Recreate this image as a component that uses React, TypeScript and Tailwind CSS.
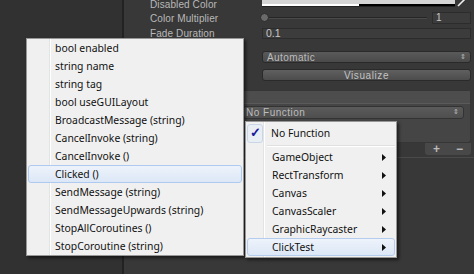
import React from "react";

const leftItems = [
    "bool enabled",
    "string name",
    "string tag",
    "bool useGUILayout",
    "BroadcastMessage (string)",
    "CancelInvoke (string)",
    "CancelInvoke ()",
    "Clicked ()",
    "SendMessage (string)",
    "SendMessageUpwards (string)",
    "StopAllCoroutines ()",
    "StopCoroutine (string)",
];

const rightItems = ["GameObject", "RectTransform", "Canvas", "CanvasScaler", "GraphicRaycaster", "ClickTest"];

const menuFont = { fontFamily: '"Noto Sans", "Open Sans", sans-serif' };
const unityFont = { fontFamily: '"Liberation Sans", Arial, sans-serif' };

function Arrow() {
    return (
        <svg width="4" height="7" viewBox="0 0 4 7" className="mr-[8px]">
            <polygon points="0,0 4,3.5 0,7" fill="#111" />
        </svg>
    );
}

function Label({ text }: { text: string }) {
    return (
        <div className="w-[138px] pl-[26px] shrink-0 text-[10px] tracking-[0.1px] text-[#b8b8b8] whitespace-nowrap">
            {text}
        </div>
    );
}

export default function App() {
    return (
        <div className="relative w-[474px] h-[274px] overflow-hidden bg-[#383838] flex" style={unityFont}>
            {/* hierarchy side */}
            <div className="w-[124px] shrink-0 bg-[#313131] border-r-2 border-[#222]" />

            {/* inspector */}
            <div className="flex-1 flex flex-col pr-[3px]">
                <div className="flex h-[13px] -mt-[6px] items-start">
                    <div className="pt-[3px]">
                        <Label text="Disabled Color" />
                    </div>
                    <div className="flex-1 flex items-start">
                        <div className="w-[193px] h-[13px] flex flex-col border-b border-[#222]">
                            <div className="flex-1 bg-[#d5d5d5]" />
                            <div className="h-[2px] flex">
                                <div className="w-[97px] bg-white" />
                                <div className="flex-1 bg-black" />
                            </div>
                        </div>
                        <svg width="10" height="9" viewBox="0 0 10 9" className="ml-[2px] mt-[4px]">
                            <line x1="1" y1="8" x2="8" y2="1" stroke="#eee" strokeWidth="1.6" />
                        </svg>
                    </div>
                </div>

                <div className="flex h-[16px] mt-[3px] items-center">
                    <Label text="Color Multiplier" />
                    <div className="flex-1 relative h-full flex items-center">
                        <div className="w-full h-[2px] bg-[#262626] border-b border-[#4a4a4a]" />
                        <div className="absolute left-[-2px] top-[3px] w-[9px] h-[9px] rounded-full bg-[#6a6a6a] border border-[#2a2a2a]" />
                    </div>
                    <div className="w-[39px] h-[12px] ml-[5px] bg-[#3c3c3c] border border-[#2c2c2c] text-[10px] leading-[10px] text-[#c8c8c8] pl-[3px]">
                        1
                    </div>
                </div>

                <div className="flex h-[14px] items-center">
                    <Label text="Fade Duration" />
                    <div className="flex-1 h-[11px] bg-[#3c3c3c] border border-[#2c2c2c] text-[10.5px] leading-[9px] text-[#c8c8c8] pl-[3px]">
                        0.1
                    </div>
                </div>

                <div className="flex h-[14px] mt-[10px] items-center">
                    <div className="w-[138px] shrink-0" />
                    <div className="flex-1 h-[12px] rounded-[3px] bg-gradient-to-b from-[#5a5a5a] to-[#4a4a4a] border border-[#2a2a2a] flex items-center justify-between px-[4px] text-[10px] tracking-[0.4px] text-[#bdbdbd]">
                        <span>Automatic</span>
                        <span className="text-[7px]">⇕</span>
                    </div>
                </div>

                <div className="flex h-[14px] mt-[4px] items-center">
                    <div className="w-[138px] shrink-0" />
                    <div className="flex-1 h-[12px] rounded-[3px] bg-gradient-to-b from-[#606060] to-[#4c4c4c] border border-[#2a2a2a] flex items-center justify-center text-[10px] tracking-[0.6px] text-[#c4c4c4]">
                        Visualize
                    </div>
                </div>

                <div className="ml-[8px] mt-[8px] h-[53px] rounded-[3px] bg-[#454545] border border-[#363636] flex flex-col">
                    <div className="h-[13px] bg-[#4d4d4d] border-b border-[#5a5a5a]" />
                    <div className="mt-[2px] mr-[6px] ml-[110px] h-[13px] rounded-[3px] bg-gradient-to-b from-[#5b5b5b] to-[#4e4e4e] border border-[#333] flex items-center justify-between pl-[2px] pr-[4px] text-[10px] tracking-[0.5px] text-[#bdbdbd]">
                        <span>No Function</span>
                        <span className="text-[7px]">⇕</span>
                    </div>
                </div>
                <div className="flex justify-end">
                    <div className="w-[46px] h-[12px] bg-[#484848] rounded-b-[3px] flex items-center justify-around text-[12px] leading-[12px] font-bold text-[#bbb]">
                        <span>+</span>
                        <span>−</span>
                    </div>
                </div>
                <div className="mt-[2px] h-px bg-[#4a4a4a] -mr-[3px]" />
            </div>

            {/* function list menu */}
            <div
                className="absolute left-[26px] top-[38px] w-[218px] bg-[#f0f0f0] border border-[#979797] shadow-[2px_2px_3px_rgba(0,0,0,0.55)] flex"
                style={menuFont}
            >
                <div className="absolute left-[22px] top-0 bottom-0 w-px bg-[#e2e3e3]" />
                <div className="absolute left-[23px] top-0 bottom-0 w-px bg-white" />
                <div className="relative flex-1 flex flex-col">
                    {leftItems.map((t) => (
                        <div
                            key={t}
                            className={
                                t === "Clicked ()"
                                    ? "h-[18px] mx-[1px] rounded-[3px] border border-[#aecaf0] bg-gradient-to-b from-[#eef3fb] to-[#dce7f6] flex items-center pl-[26px] pt-px text-[10.4px] text-[#111]"
                                    : "h-[18px] mx-[1px] flex items-center pl-[27px] pt-px text-[10.4px] text-[#111]"
                            }
                        >
                            {t}
                        </div>
                    ))}
                </div>
            </div>

            {/* component submenu */}
            <div
                className="absolute left-[245px] top-[121px] w-[152px] bg-[#f0f0f0] border border-[#979797] shadow-[2px_2px_3px_rgba(0,0,0,0.55)] pt-px pb-px"
                style={menuFont}
            >
                <div className="absolute left-[17px] top-0 bottom-0 w-px bg-[#e2e3e3]" />
                <div className="absolute left-[18px] top-0 bottom-0 w-px bg-white" />
                <div className="relative flex h-[20px] items-center">
                    <div className="ml-[1px] w-[16px] h-[19px] rounded-[3px] border border-[#c9d6e8] bg-[#e9eef5] flex items-center justify-center text-[13px] text-[#1b1b9c] font-bold">
                        ✓
                    </div>
                    <span className="ml-[8px] pt-px text-[10.4px] text-[#111]">No Function</span>
                </div>
                <div className="relative h-[5px] pt-[2px] ml-[21px] mr-px">
                    <div className="h-px bg-[#e0e0e0]" />
                    <div className="h-px bg-white" />
                </div>
                {rightItems.map((t) => (
                    <div
                        key={t}
                        className={
                            t === "ClickTest"
                                ? "relative h-[18px] mx-[1px] rounded-[3px] border border-[#b4cdee] bg-gradient-to-b from-[#eef3fb] to-[#dce7f6] flex items-center justify-between pl-[24px] pt-px text-[10.4px] text-[#111]"
                                : "relative h-[18px] mx-[1px] border border-transparent flex items-center justify-between pl-[24px] pt-px text-[10.4px] text-[#111]"
                        }
                    >
                        <span>{t}</span>
                        <Arrow />
                    </div>
                ))}
            </div>
        </div>
    );
}
